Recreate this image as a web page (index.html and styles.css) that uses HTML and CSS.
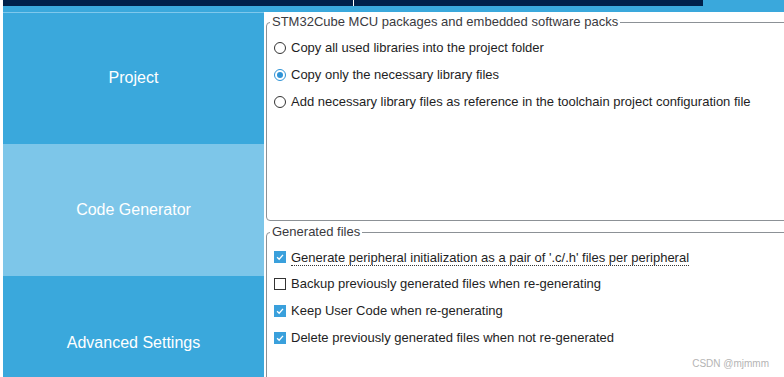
FILE: index.html
```html
<!DOCTYPE html>
<html lang="en">
<head>
  <meta charset="UTF-8" />
  <title>Project Manager</title>
  <link rel="stylesheet" href="styles.css">
</head>
<body>

  <!-- Barra de abas -->
  <div class="topbar">
    <div class="tabs">
      <div class="tab"></div>
      <div class="tab"></div>
    </div>
  </div>

  <div class="main">
    <!-- Menu lateral -->
    <div class="sidebar">
      <div class="side-item">Project</div>
      <div class="side-item active">Code Generator</div>
      <div class="side-item">Advanced Settings</div>
    </div>

    <!-- Conteudo -->
    <div class="content">
      <fieldset class="group packs">
        <legend>STM32Cube MCU packages and embedded software packs</legend>
        <div class="row"><span class="radio"></span>Copy all used libraries into the project folder</div>
        <div class="row"><span class="radio checked"></span>Copy only the necessary library files</div>
        <div class="row"><span class="radio"></span>Add necessary library files as reference in the toolchain project configuration file</div>
      </fieldset>

      <fieldset class="group files">
        <legend>Generated files</legend>
        <div class="row"><span class="check checked"><svg viewBox="0 0 12 12"><path d="M2.5 6.2 L5 8.6 L9.6 3.4" /></svg></span><span class="focus">Generate peripheral initialization as a pair of '.c/.h' files per peripheral</span></div>
        <div class="row"><span class="check"></span>Backup previously generated files when re-generating</div>
        <div class="row"><span class="check checked"><svg viewBox="0 0 12 12"><path d="M2.5 6.2 L5 8.6 L9.6 3.4" /></svg></span>Keep User Code when re-generating</div>
        <div class="row"><span class="check checked"><svg viewBox="0 0 12 12"><path d="M2.5 6.2 L5 8.6 L9.6 3.4" /></svg></span>Delete previously generated files when not re-generated</div>
      </fieldset>
    </div>
  </div>

  <div class="watermark">CSDN @mjmmm</div>

</body>
</html>
```

FILE: styles.css
```css
* { margin: 0; padding: 0; box-sizing: border-box; }
body {
  font-family: "Liberation Sans", Arial, sans-serif;
  font-size: 13px;
  color: #1e1e24;
  background: #fff;
  padding-left: 3px;
  height: 377px;
  overflow: hidden;
}

.topbar {
  height: 12px;
  background: #3aa8dc;
}
.tabs {
  display: flex;
  width: 700px;
  height: 6px;
  background: #00204a;
}
.tab { height: 6px; }
.tab:first-child {
  width: 351px;
  border-right: 1px solid #fff;
}

.main {
  display: flex;
  height: 365px;
}

.sidebar {
  width: 261px;
  display: flex;
  flex-direction: column;
  background: #3aa8dc;
}
.side-item {
  height: 131px;
  display: flex;
  justify-content: center;
  align-items: center;
  color: #fff;
  font-size: 16px;
  background: #3aa8dc;
  border-top: 1px solid #7fc8ec;
}
.side-item.active {
  background: #7dc6e9;
  border-top: none;
  margin-top: 2px;
  height: 133px;
}
.side-item:last-child {
  border-top: none;
  height: 101px;
  padding-top: 32px;
}

.content {
  flex: 1;
  padding-left: 2px;
  overflow: hidden;
}

.group {
  border: 1px solid #8c9196;
  border-radius: 4px;
  padding: 4px 0 0 7px;
  width: calc(100% + 10px);
}
.group legend {
  color: #3a3a40;
  line-height: 14px;
  padding: 0 2px;
  margin-left: -4px;
}
.packs {
  margin-top: 3px;
  padding-top: 5px;
  height: 206px;
}
.files {
  margin-top: 4px;
  height: 160px;
}

.row {
  display: flex;
  align-items: center;
  height: 27px;
}

.radio {
  width: 12px;
  height: 12px;
  border: 1px solid #333;
  border-radius: 50%;
  margin-right: 5px;
  background: #fff;
  display: flex;
  justify-content: center;
  align-items: center;
}
.radio.checked { border-color: #2f93d6; }
.radio.checked::after {
  content: "";
  width: 6px;
  height: 6px;
  border-radius: 50%;
  background: #2f93d6;
}

.check {
  width: 12px;
  height: 12px;
  border: 1px solid #333;
  margin-right: 5px;
  background: #fff;
}
.check.checked {
  border-color: #3aa0dc;
  background: #3aa0dc;
}
.check svg {
  display: block;
  width: 10px;
  height: 10px;
}
.check svg path {
  fill: none;
  stroke: #fff;
  stroke-width: 1.6;
}

.focus {
  border-bottom: 1px dotted #333;
  line-height: 15px;
  margin-top: 3px;
}

.watermark {
  position: absolute;
  right: 15px;
  bottom: 8px;
  font-size: 10px;
  color: #b4b4b4;
}
```
